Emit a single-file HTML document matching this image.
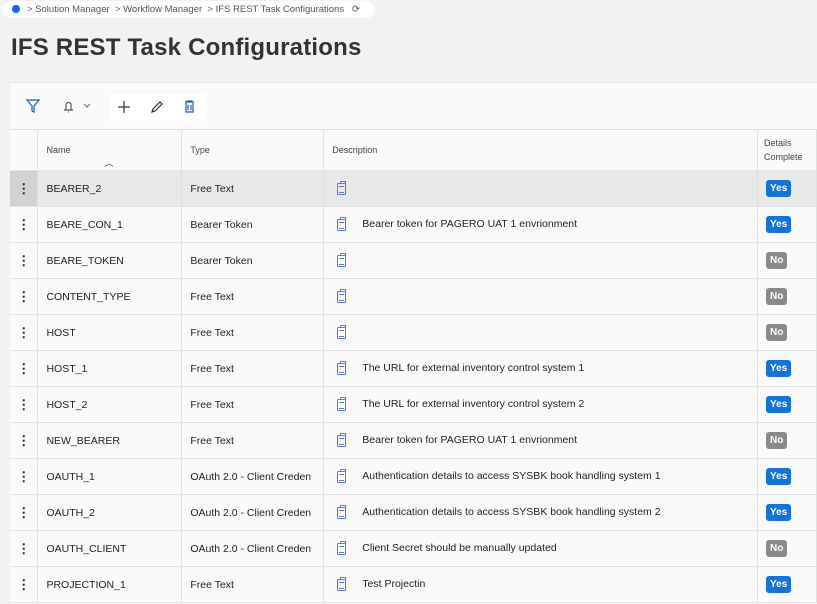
<!DOCTYPE html>
<html><head><style>
*{box-sizing:border-box;margin:0;padding:0}
html,body{width:817px;height:604px;overflow:hidden}
body{background:#f2f2f4;font-family:"Liberation Sans",sans-serif;color:#222;position:relative}
.bc{position:absolute;left:3px;top:1px;width:371px;height:17px;background:#fff;border-radius:8px;font-size:9.5px;color:#555;line-height:17px;padding-left:9px;white-space:nowrap;overflow:hidden}
.bc .dot{display:inline-block;width:8px;height:8px;border-radius:50%;background:#1467d8;vertical-align:-0.5px;margin-right:7px}
h1{position:absolute;left:11px;top:34px;font-size:24px;font-weight:bold;color:#333;letter-spacing:0.2px}
.panel{position:absolute;left:10px;top:82px;width:807px;height:522px;background:#fafafa;border-top:1px solid #e6e6e6}
.tb2{position:absolute;left:109px;top:94px;width:97px;height:27px;background:#fff;border-radius:3px}
.grid{position:absolute;left:10px;top:129px;height:475px;overflow:hidden}
table{border-collapse:collapse;font-size:10.5px}
td{border-right:1px solid #e0e0e0;border-bottom:1px solid #e4e4e4;height:36px;padding:0 8px;white-space:nowrap;overflow:hidden}
tr.h td{height:41px;font-size:9px;color:#444;border-top:1px solid #e0e0e0}
td.k{width:28px;text-align:center;font-weight:bold;font-size:13px;padding:0}
.b{display:inline-block;color:#fff;font-weight:bold;font-size:10px;padding:3px 4px;border-radius:3px;background:#1473d6}
.n{background:#8a8a8a}
.ic{display:inline-block;width:9px;height:12px;border:1.2px solid #5b7bd8;border-radius:1px;vertical-align:middle;margin-right:16px;position:relative;margin-left:5px}
.ic:before{content:"";position:absolute;left:1.5px;top:-3px;width:4px;height:2px;border:1px solid #5b7bd8;border-bottom:none}
.ic:after{content:"";position:absolute;left:1px;top:2px;width:5px;height:5px;border-top:1px solid #5b7bd8;border-bottom:1px solid #5b7bd8}
tr.sel td{background:#e8e8e8}
tr.sel td.k{background:#d2d2d2}
</style></head><body>
<div class="bc"><span class="dot"></span>&gt; Solution Manager &nbsp;&gt; Workflow Manager &nbsp;&gt; IFS REST Task Configurations &nbsp; ⟳</div>
<h1>IFS REST Task Configurations</h1>
<div class="panel"></div>
<div class="tb2"></div>
<svg style="position:absolute;left:0;top:90px" width="220" height="35" fill="none" stroke="#1a5fb4" stroke-width="1.2">
<path d="M27 10h12l-5 6v6l-2-1v-5z"/>
<path d="M64 20h9M66 20v-5a2.5 2.5 0 0 1 5 0v5M68 22h1" stroke="#555"/>
<path d="M84 14l3 3 3-3" stroke="#777"/>
<path d="M124 11v12M118 17h12" stroke="#333"/>
<path d="M152 22l1-3 7-7 2 2-7 7z" stroke="#333"/>
<path d="M185 12h9M187 12v-1h5v1M186 13v9h7v-9M188 15v5M191 15v5"/>
</svg>
<div class="grid"><table>
<tr class="h"><td class="k"></td><td style="width:144px;position:relative">Name<span style="position:absolute;left:66px;top:26px">︿</span></td><td style="width:142px">Type</td><td style="width:434px">Description</td><td style="width:59px;padding:0 6px;line-height:14px">Details<br>Complete</td></tr>
<tr class="sel"><td class="k">⋮</td><td>BEARER_2</td><td>Free Text</td><td><span class="ic"></span></td><td><span class="b">Yes</span></td></tr>
<tr><td class="k">⋮</td><td>BEARE_CON_1</td><td>Bearer Token</td><td><span class="ic"></span>Bearer token for PAGERO UAT 1 envrionment</td><td><span class="b">Yes</span></td></tr>
<tr><td class="k">⋮</td><td>BEARE_TOKEN</td><td>Bearer Token</td><td><span class="ic"></span></td><td><span class="b n">No</span></td></tr>
<tr><td class="k">⋮</td><td>CONTENT_TYPE</td><td>Free Text</td><td><span class="ic"></span></td><td><span class="b n">No</span></td></tr>
<tr><td class="k">⋮</td><td>HOST</td><td>Free Text</td><td><span class="ic"></span></td><td><span class="b n">No</span></td></tr>
<tr><td class="k">⋮</td><td>HOST_1</td><td>Free Text</td><td><span class="ic"></span>The URL for external inventory control system 1</td><td><span class="b">Yes</span></td></tr>
<tr><td class="k">⋮</td><td>HOST_2</td><td>Free Text</td><td><span class="ic"></span>The URL for external inventory control system 2</td><td><span class="b">Yes</span></td></tr>
<tr><td class="k">⋮</td><td>NEW_BEARER</td><td>Free Text</td><td><span class="ic"></span>Bearer token for PAGERO UAT 1 envrionment</td><td><span class="b n">No</span></td></tr>
<tr><td class="k">⋮</td><td>OAUTH_1</td><td>OAuth 2.0 - Client Creden</td><td><span class="ic"></span>Authentication details to access SYSBK book handling system 1</td><td><span class="b">Yes</span></td></tr>
<tr><td class="k">⋮</td><td>OAUTH_2</td><td>OAuth 2.0 - Client Creden</td><td><span class="ic"></span>Authentication details to access SYSBK book handling system 2</td><td><span class="b">Yes</span></td></tr>
<tr><td class="k">⋮</td><td>OAUTH_CLIENT</td><td>OAuth 2.0 - Client Creden</td><td><span class="ic"></span>Client Secret should be manually updated</td><td><span class="b n">No</span></td></tr>
<tr><td class="k">⋮</td><td>PROJECTION_1</td><td>Free Text</td><td><span class="ic"></span>Test Projectin</td><td><span class="b">Yes</span></td></tr>
</table></div>
</body></html>
